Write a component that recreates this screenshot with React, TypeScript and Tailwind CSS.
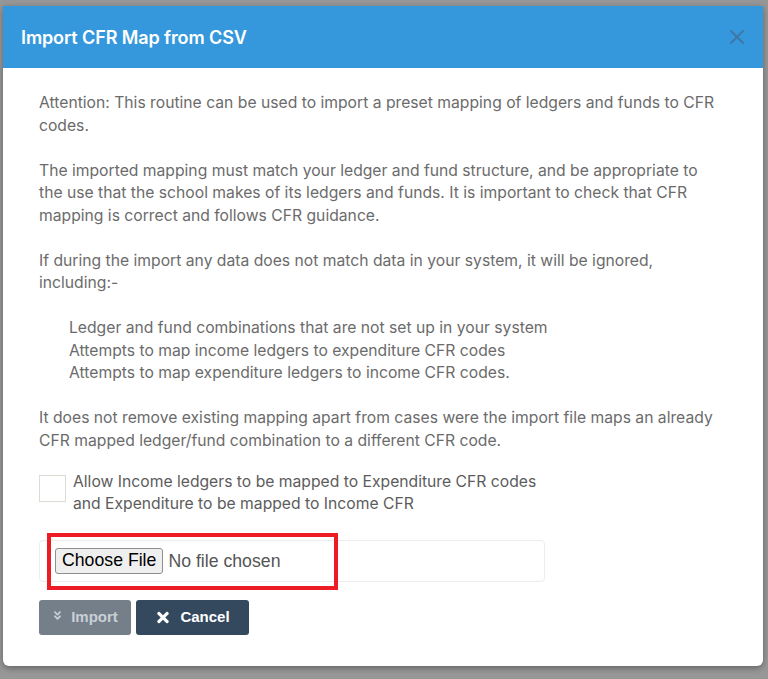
import { FaAngleDoubleDown, FaTimes } from 'react-icons/fa';

const Paragraph = ({ children }: { children: React.ReactNode }) => (
  <p className="mb-[22.5px]">{children}</p>
);

export default function App() {
  return (
    <div className="w-[768px] h-[679px] bg-[#979797] overflow-hidden pt-[6px] pl-[3px] font-['Inter',sans-serif]">
      <div className="w-[760px] h-[660px] bg-white rounded-b-[6px] shadow-[0_2px_6px_rgba(0,0,0,0.35)] flex flex-col">
        <div className="h-[62px] bg-[#3598dc] flex items-center justify-between pl-[18px] pr-[19px]">
          <h4 className="text-white text-[18px] font-semibold tracking-[-0.1px]">
            Import CFR Map from CSV
          </h4>
          <svg width="14" height="14" viewBox="0 0 14 14" className="text-[#3f76a3]">
            <path d="M1 1 L13 13 M13 1 L1 13" stroke="currentColor" strokeWidth="1.8" strokeLinecap="round" />
          </svg>
        </div>

        <div className="pl-[36px] pr-[44px] pt-[24px] text-[15.7px] leading-[22.5px] text-[#6b6b6b]">
          <Paragraph>
            Attention: This routine can be used to import a preset mapping of ledgers and funds to CFR
            codes.
          </Paragraph>
          <Paragraph>
            The imported mapping must match your ledger and fund structure, and be appropriate to the
            use that the school makes of its ledgers and funds. It is important to check that CFR
            mapping is correct and follows CFR guidance.
          </Paragraph>
          <Paragraph>
            If during the import any data does not match data in your system, it will be ignored,
            including:-
          </Paragraph>
          <ul className="mb-[22.5px] pl-[30px]">
            <li>Ledger and fund combinations that are not set up in your system</li>
            <li>Attempts to map income ledgers to expenditure CFR codes</li>
            <li>Attempts to map expenditure ledgers to income CFR codes.</li>
          </ul>
          <Paragraph>
            It does not remove existing mapping apart from cases were the import file maps an already
            CFR mapped ledger/fund combination to a different CFR code.
          </Paragraph>

          <label className="flex items-start gap-[7px] mt-[-4px]">
            <span className="mt-[4px] w-[27px] h-[27px] shrink-0 border border-[#dcdcd4] bg-white" />
            <span className="text-[#5c5c5c] leading-[22px]">
              Allow Income ledgers to be mapped to Expenditure CFR codes
              <br />
              and Expenditure to be mapped to Income CFR
            </span>
          </label>

          <div className="relative mt-[25px] w-[506px] h-[42px] border border-[#ececec] rounded-[4px] flex items-center pl-[15px]">
            <input
              type="file"
              className="text-[17.7px] text-[#555] font-['Liberation_Sans',Arial,sans-serif] file:bg-[#efefef] file:text-black file:border file:border-[#8f8f8f] file:rounded-[3px] file:px-[6px] file:h-[26px] file:mr-[5px]"
            />
            <div className="absolute left-[7px] top-[-8px] w-[291px] h-[57px] border-[4px] border-[#ed1c24] pointer-events-none" />
          </div>

          <div className="mt-[18px] flex gap-[5px] font-['Liberation_Sans',Arial,sans-serif] text-[15px] font-bold">
            <button className="w-[92px] h-[35px] rounded-[3px] bg-[#747f8a] text-[#c9cfd5] flex items-center justify-center gap-[8px]">
              <FaAngleDoubleDown className="w-[11px] h-[11px] mt-[-4px]" />
              Import
            </button>
            <button className="w-[113px] h-[35px] rounded-[3px] bg-[#34495e] text-white flex items-center justify-center gap-[9px]">
              <FaTimes className="w-[16px] h-[17px]" />
              Cancel
            </button>
          </div>
        </div>
      </div>
    </div>
  );
}
